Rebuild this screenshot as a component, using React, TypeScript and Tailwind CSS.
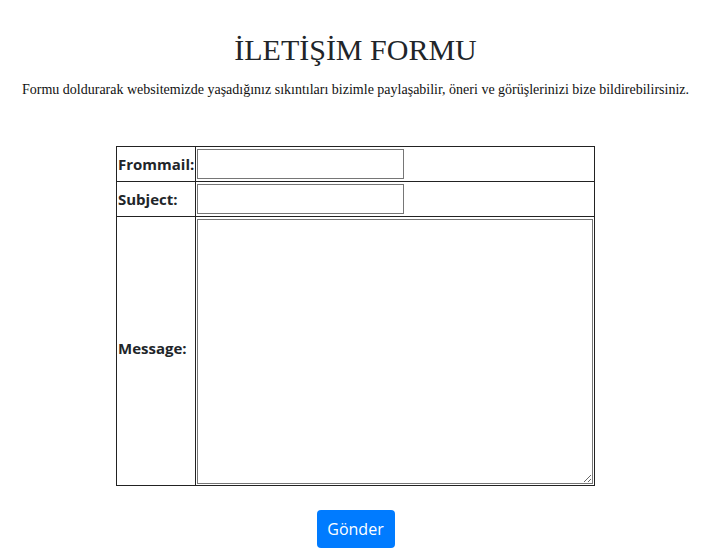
export default function App() {
  return (
    <div className="w-[711px] min-h-[557px] bg-white text-[#212529]">
      <div className="text-center pt-[31px]">
        <h1 className="text-[30px] leading-[38px] font-normal font-['Liberation_Serif',Georgia,serif] text-[#212529]">
          İLETİŞİM FORMU
        </h1>
        <p className="mt-[11px] text-[14px] leading-[20px] font-['Liberation_Serif',Georgia,serif] text-[#111]">
          Formu doldurarak websitemizde yaşadığınız sıkıntıları bizimle paylaşabilir, öneri ve görüşlerinizi bize bildirebilirsiniz.
        </p>
      </div>
      <form className="mt-[46px] flex flex-col items-center font-['Open_Sans','Noto_Sans',sans-serif]">
        <table className="border-collapse w-[479px]">
          <tbody>
            <tr className="h-[35px]">
              <td className="border border-[#222] w-[78px] px-[1px] font-bold text-[15px]">Frommail:</td>
              <td className="border border-[#222] px-[1px]">
                <input className="w-[207px] h-[30px] border border-[#767676] block" />
              </td>
            </tr>
            <tr className="h-[35px]">
              <td className="border border-[#222] px-[1px] font-bold text-[15px]">Subject:</td>
              <td className="border border-[#222] px-[1px]">
                <input className="w-[207px] h-[30px] border border-[#767676] block" />
              </td>
            </tr>
            <tr className="h-[269px]">
              <td className="border border-[#222] px-[1px] pb-[5px] font-bold text-[15px]">Message:</td>
              <td className="border border-[#222] px-[1px]">
                <textarea className="w-full h-[265px] border border-[#767676] block resize" />
              </td>
            </tr>
          </tbody>
        </table>
        <button
          type="button"
          className="mt-[24px] w-[78px] h-[38px] rounded-[4px] bg-[#007bff] text-white text-[16px] font-['Open_Sans','Noto_Sans',sans-serif]"
        >
          Gönder
        </button>
      </form>
    </div>
  );
}
